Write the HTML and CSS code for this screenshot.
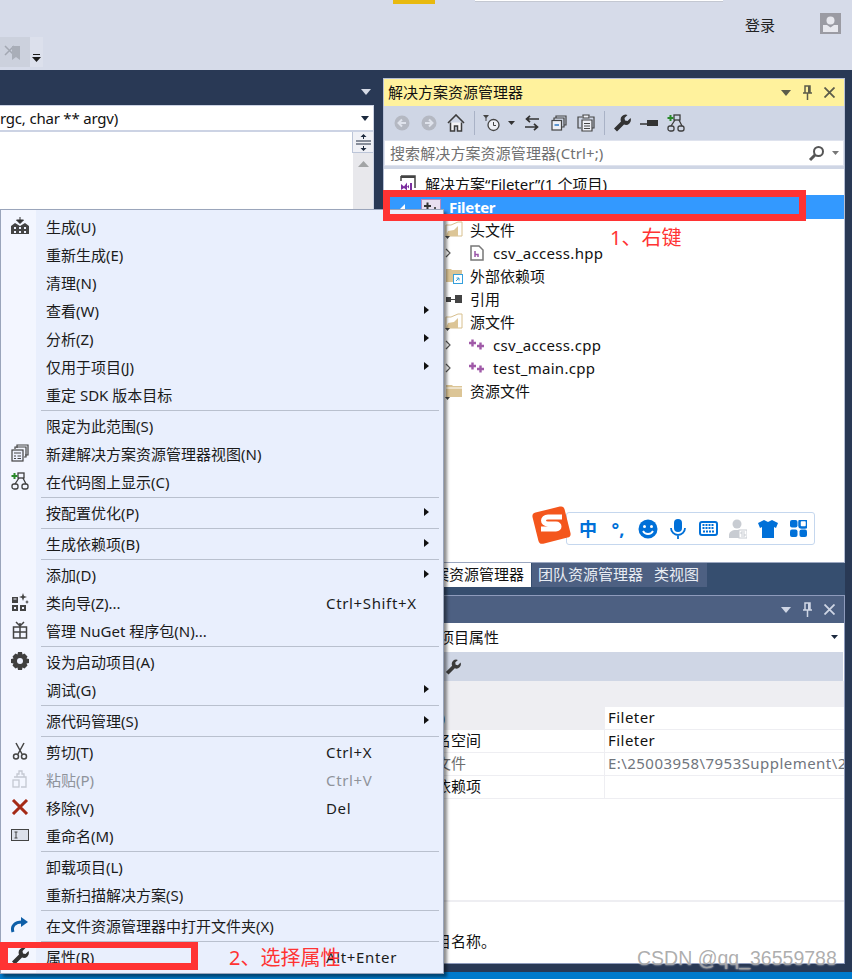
FILE: index.html
```html
<!DOCTYPE html>
<html lang="zh-CN">
<head>
<meta charset="utf-8">
<title>Visual Studio</title>
<link rel="stylesheet" href="styles.css">
</head>
<body>
<div class="app">
  <header class="topbar">
    <div class="top-strip">
      <span class="top-accent"></span>
      <span class="top-input"></span>
    </div>
    <div class="account">
      <span class="login">登录</span>
      <span class="avatar"><svg width="21" height="21" viewBox="0 0 21 21"><rect width="21" height="21" fill="#9b9ba3"/><circle cx="10.5" cy="7.5" r="4" fill="#e8e8ee"/><path d="M3 19v-7h4l3.500 2.500L14 12h4v7z" fill="#e8e8ee"/></svg></span>
    </div>
    <div class="quick">
      <span class="quick-btn"><svg width="18" height="18" viewBox="0 0 18 18" fill="none" stroke="#a3a8b2"><path d="M1 3l9 9M10 3l-9 9" stroke-width="1.500"/><path d="M8 3h8v14l-4-3-4 3z" fill="#a9aeb8" stroke="none"/></svg></span>
      <span class="quick-more"><svg width="9" height="9" viewBox="0 0 9 9"><path d="M1 0h7v1H1z" fill="#1b1b1b"/><path d="M0 3h9L4.500 8z" fill="#1b1b1b"/></svg></span>
    </div>
  </header>

  <main class="workspace">
    <section class="editor">
      <div class="editor-head"><svg width="10" height="6" viewBox="0 0 10 6"><path d="M0 0h10L5 6z" fill="#d5dae6"/></svg></div>
      <div class="combo"><span class="combo-text">rgc, char ** argv)</span><svg width="8" height="5" viewBox="0 0 8 5"><path d="M0 0h8L4 5z" fill="#1b293e"/></svg></div>
      <div class="code">
        <div class="code-body"></div>
        <div class="vscroll">
          <div class="split-btn"><svg width="15" height="17" viewBox="0 0 15 17"><path d="M0 7h15M0 10h15M7.500 1v4M7.500 12v4" stroke="#1e2a3e" fill="none"/><path d="M7.500 0l3 3h-6zM7.500 17l3-3h-6z" fill="#1e2a3e"/></svg></div>
          <svg class="up-arrow" width="11" height="6" viewBox="0 0 11 6"><path d="M5.500 0L11 6H0z" fill="#a2a4a5"/></svg>
        </div>
      </div>
    </section>

    <section class="side">
      <div class="explorer">
        <div class="tw-title">
          <span class="tw-name">解决方案资源管理器</span>
          <svg class="tw-ico" width="10" height="6" viewBox="0 0 10 6"><path d="M0 0h10L5 6z" fill="#5c5c4a"/></svg>
          <svg class="tw-ico" width="11" height="15" viewBox="0 0 11 15"><path d="M3 1h5v7H3zM1 8h9M5.500 8v7" stroke="#5c5c4a" stroke-width="1.500" fill="none"/><path d="M6 1h2v7H6z" fill="#5c5c4a"/></svg>
          <svg class="tw-ico" width="11" height="11" viewBox="0 0 11 11"><path d="M.5.500l10 10M10.500.500l-10 10" stroke="#5c5c4a" stroke-width="1.800"/></svg>
        </div>
        <div class="se-tools">
          <span class="tool"><svg width="16" height="16" viewBox="0 0 16 16"><circle cx="8" cy="8" r="7.500" fill="#b4b8c2"/><path d="M12 8H5M8 4.500L4.500 8 8 11.500" fill="none" stroke="#dfe3ec" stroke-width="2"/></svg></span>
          <span class="tool"><svg width="16" height="16" viewBox="0 0 16 16"><circle cx="8" cy="8" r="7.500" fill="#b4b8c2"/><path d="M4 8h7M8 4.500L11.500 8 8 11.500" fill="none" stroke="#dfe3ec" stroke-width="2"/></svg></span>
          <span class="tool"><svg width="18" height="18" viewBox="0 0 18 18"><path d="M1 9l8-8 8 8" fill="none" stroke="#3c3c3c" stroke-width="1.600"/><path d="M3.500 8.500V17h4v-5h3v5h4V8.500" fill="#f4f4f6" stroke="#3c3c3c" stroke-width="1.500"/></svg></span>
          <span class="tool-sep"></span>
          <span class="tool"><svg width="18" height="18" viewBox="0 0 18 18"><circle cx="10.500" cy="11" r="5.500" fill="#eef0f6" stroke="#444" stroke-width="1.300"/><path d="M10.500 8v3.500H13" fill="none" stroke="#444"/><path d="M0 1h6L3 4.500z" fill="#444"/><path d="M3 4v3" stroke="#444"/></svg></span>
          <span class="tool-dd"><svg width="7" height="4" viewBox="0 0 7 4"><path d="M0 0h7L3.500 4z" fill="#333"/></svg></span>
          <span class="tool"><svg width="16" height="16" viewBox="0 0 16 16" fill="none" stroke="#333" stroke-width="1.700"><path d="M15 4H3M6 .8L2.500 4 6 7.200"/><path d="M1 12h12M10 8.800l3.500 3.200-3.500 3.200"/></svg></span>
          <span class="tool"><svg width="16" height="16" viewBox="0 0 16 16" fill="none" stroke="#444" stroke-width="1.200"><path d="M5 3V1h10v9h-2"/><path d="M3 5V3h10v9h-2"/><rect x="1" y="5.500" width="9.500" height="9.500" fill="#eef0f6"/><path d="M3.500 10h4.500" stroke="#2c78c4" stroke-width="1.500"/></svg></span>
          <span class="tool"><svg width="18" height="18" viewBox="0 0 18 18" fill="none" stroke="#444" stroke-width="1.200"><path d="M4 14H1V3h4M13 3h4v11h-2"/><path d="M6 1h6v3H6z" fill="#eef0f6"/><path d="M5 6h10v11H5z" fill="#eef0f6"/><path d="M7 9.500h6M7 12h6M7 14.500h6" stroke-width="1"/></svg></span>
          <span class="tool-sep"></span>
          <span class="tool"><svg width="18" height="18" viewBox="0 0 18 18"><path d="M1 14.500l7-7a5 5 0 0 1 6.500-6.500l-3 3 .5 2.500 2.500.5 3-3A5 5 0 0 1 11 10.500L4 17.500z" fill="#333"/></svg></span>
          <span class="tool"><svg width="18" height="8" viewBox="0 0 18 8"><path d="M0 5h7" stroke="#333" stroke-width="1.500"/><rect x="7" y="1" width="11" height="6" fill="#333"/></svg></span>
          <span class="tool"><svg width="18" height="18" viewBox="0 0 18 18" fill="none" stroke="#3d3d3d" stroke-width="1.300"><rect x="7" y="1" width="6" height="5"/><rect x="1" y="12" width="6" height="5" rx="2"/><rect x="11" y="12" width="6" height="5" rx="2"/><path d="M8 6l-4 6M12 6l3 6"/><path d="M3.500 1v6M.5 4h6" stroke="#2a8a2a" stroke-width="2"/></svg></span>
        </div>
        <div class="se-search">
          <span class="placeholder">搜索解决方案资源管理器(Ctrl+;)</span>
          <svg width="17" height="17" viewBox="0 0 17 17" fill="none"><circle cx="10.500" cy="6.500" r="4.500" stroke="#555" stroke-width="2"/><path d="M7 10l-5 5" stroke="#555" stroke-width="3"/></svg>
          <svg class="search-dd" width="7" height="4" viewBox="0 0 7 4"><path d="M0 0h7L3.500 4z" fill="#777"/></svg>
        </div>
        <ul class="tree">
          <li class="node node-sln"><svg class="ni" width="17" height="17" viewBox="0 0 17 17"><path d="M1 1h14v12" fill="none" stroke="#444" stroke-width="1.500"/><path d="M1 1v5" stroke="#444" stroke-width="1.500"/><path d="M1 1h14v2H1z" fill="#444"/><path d="M1 9l3 2.500 3-4v8l-3-2.500-3 2zM9 10l-2 1.500 2 2z" fill="#7c2e9f"/><rect x="10" y="8" width="2" height="7" fill="#7c2e9f"/></svg><span>解决方案“Fileter”(1 个项目)</span></li>
          <li class="node node-proj"><svg class="twist" width="7" height="7" viewBox="0 0 7 7"><path d="M7 0v7H0z" fill="#fff"/></svg><svg class="ni-proj" width="20" height="17" viewBox="0 0 20 17"><rect x=".5" y=".5" width="19" height="16" fill="#e8dff0" stroke="#b08ac0"/><path d="M3 7h7M6.500 3.500v7" stroke="#333" stroke-width="2"/><path d="M11 11h6M14 8v6" stroke="#555" stroke-width="2"/></svg><b>Fileter</b></li>
          <li class="node node-d1"><svg class="ni-fold" width="18" height="18" viewBox="0 0 18 18"><path d="M1 4h5l7-3h4v14H1z" fill="#fff" stroke="#d8c08e"/><path d="M1 15l2-5 6-1 4-4v10z" fill="#dcc596"/><path d="M0 15h5l-2.500 3z" fill="#444"/></svg><span>头文件</span></li>
          <li class="node node-d2"><svg class="chev" width="6" height="10" viewBox="0 0 6 10"><path d="M1 1l4 4-4 4" fill="none" stroke="#555" stroke-width="1.200"/></svg><svg class="ni-file" width="16" height="16" viewBox="-1 0 16 16"><path d="M1 1h8l4 4v10H1z" fill="#fff" stroke="#777" stroke-width="1.500"/><path d="M5 6v6M5 9.500h3v2.500" fill="none" stroke="#9a55a8" stroke-width="1.500"/></svg><span>csv_access.hpp</span></li>
          <li class="node node-d1"><svg class="ni-fold" width="18" height="18" viewBox="0 0 18 18"><path d="M1 2h5l1 1h10v6H1z" fill="#dcc596"/><path d="M1 5h16v10H1z" fill="#dcc596"/><rect x="8.500" y="7.500" width="9" height="9" fill="#fff" stroke="#35a0dc"/><path d="M11 14l3-3M11.500 11H14v2.500" fill="none" stroke="#35a0dc"/></svg><span>外部依赖项</span></li>
          <li class="node node-d1"><svg class="ni-fold" width="18" height="18" viewBox="0 0 18 18"><rect x="1" y="7" width="5" height="5" fill="#444"/><path d="M6 9.500h4" stroke="#444"/><rect x="10" y="5" width="7" height="8" fill="#444"/></svg><span>引用</span></li>
          <li class="node node-d1"><svg class="ni-fold" width="18" height="18" viewBox="0 0 18 18"><path d="M1 4h5l7-3h4v14H1z" fill="#fff" stroke="#d8c08e"/><path d="M1 15l2-5 6-1 4-4v10z" fill="#dcc596"/><path d="M0 15h5l-2.500 3z" fill="#444"/></svg><span>源文件</span></li>
          <li class="node node-d2"><svg class="chev" width="6" height="10" viewBox="0 0 6 10"><path d="M1 1l4 4-4 4" fill="none" stroke="#555" stroke-width="1.200"/></svg><svg class="ni-file" width="16" height="16" viewBox="0 0 16 16"><path d="M3.500 2.500v7M0 6h7M11.500 5.500v7M8 9h7" stroke="#a05aa8" stroke-width="2.400"/></svg><span>csv_access.cpp</span></li>
          <li class="node node-d2"><svg class="chev" width="6" height="10" viewBox="0 0 6 10"><path d="M1 1l4 4-4 4" fill="none" stroke="#555" stroke-width="1.200"/></svg><svg class="ni-file" width="16" height="16" viewBox="0 0 16 16"><path d="M3.500 2.500v7M0 6h7M11.500 5.500v7M8 9h7" stroke="#a05aa8" stroke-width="2.400"/></svg><span>test_main.cpp</span></li>
          <li class="node node-d1"><svg class="ni-fold" width="18" height="18" viewBox="0 0 18 18"><path d="M1 3h6l1 1h9v11H1z" fill="#dcc596"/><path d="M1 6h16" stroke="#fff"/><path d="M0 15h5l-2.500 3z" fill="#444"/></svg><span>资源文件</span></li>
        </ul>
      </div>
      <nav class="tabs">
        <span class="tab tab-on">解决方案资源管理器</span>
        <span class="tab tab-a">团队资源管理器</span>
        <span class="tab tab-b">类视图</span>
      </nav>
      <div class="props">
        <div class="tw-title tw-dark">
          <span class="tw-name">属性</span>
          <svg class="tw-ico" width="10" height="6" viewBox="0 0 10 6"><path d="M0 0h10L5 6z" fill="#cfd6e5"/></svg>
          <svg class="tw-ico" width="11" height="15" viewBox="0 0 11 15"><path d="M3 1h5v7H3zM1 8h9M5.500 8v7" stroke="#cfd6e5" stroke-width="1.500" fill="none"/><path d="M6 1h2v7H6z" fill="#cfd6e5"/></svg>
          <svg class="tw-ico" width="11" height="11" viewBox="0 0 11 11"><path d="M.5.500l10 10M10.500.500l-10 10" stroke="#cfd6e5" stroke-width="1.800"/></svg>
        </div>
        <div class="prop-select"><span>Fileter 项目属性</span><svg width="7" height="4" viewBox="0 0 7 4"><path d="M0 0h7L3.500 4z" fill="#1b293e"/></svg></div>
        <div class="prop-tools"><svg width="16" height="16" viewBox="0 0 18 18"><path d="M1 14.500l7-7a5 5 0 0 1 6.500-6.500l-3 3 .5 2.500 2.500.5 3-3A5 5 0 0 1 11 10.500L4 17.500z" fill="#3a3a3a"/></svg></div>
        <div class="prop-cat"></div>
        <div class="prop-row prop-row-sel"><span class="pk">(名称)</span><span class="pv">Fileter</span></div>
        <div class="prop-row"><span class="pk">根命名空间</span><span class="pv">Fileter</span></div>
        <div class="prop-row prop-row-dim"><span class="pk">项目文件</span><span class="pv">E:\25003958\7953Supplement\2</span></div>
        <div class="prop-row"><span class="pk">项目依赖项</span><span class="pv"></span></div>
        <div class="prop-fill"></div>
        <div class="prop-desc">指定项目名称。</div>
      </div>
    </section>
  </main>
  <footer class="statusbar"></footer>

  <div class="menu">
    <div class="mi"><span class="mic"><svg width="18" height="18" viewBox="0 0 18 18"><path d="M9 0v4M5.500 3L9 6.500 12.500 3z" stroke="#333" fill="#333"/><path d="M0 9l4-3 5 3 5-3 4 3v8H0z" fill="#444"/><path d="M3 10h2v2H3zM8 10h2v2H8zM13 10h2v2h-2zM3 14h2v2H3zM8 14h2v2H8zM13 14h2v2h-2z" fill="#eef2ff"/></svg></span><span>生成(U)</span></div>
    <div class="mi"><span class="mic"></span><span>重新生成(E)</span></div>
    <div class="mi"><span class="mic"></span><span>清理(N)</span></div>
    <div class="mi"><span class="mic"></span><span>查看(W)</span><i class="sub"></i></div>
    <div class="mi"><span class="mic"></span><span>分析(Z)</span><i class="sub"></i></div>
    <div class="mi"><span class="mic"></span><span>仅用于项目(J)</span><i class="sub"></i></div>
    <div class="mi"><span class="mic"></span><span>重定 SDK 版本目标</span></div>
    <hr class="ms">
    <div class="mi"><span class="mic"></span><span>限定为此范围(S)</span></div>
    <div class="mi"><span class="mic"><svg width="18" height="18" viewBox="0 0 18 18" fill="none" stroke="#444" stroke-width="1.200"><path d="M6 4V1h11v10h-3"/><path d="M4 5V3h11v10h-2"/><rect x="1" y="6" width="11" height="11" fill="#eef2ff"/><path d="M3 9h7M3 12h2M6.500 12H10M3 14.500h2M6.500 14.500H10"/></svg></span><span>新建解决方案资源管理器视图(N)</span></div>
    <div class="mi"><span class="mic"><svg width="18" height="18" viewBox="0 0 18 18" fill="none" stroke="#3d3d3d" stroke-width="1.300"><rect x="7" y="1" width="6" height="5"/><rect x="1" y="12" width="6" height="5" rx="2"/><rect x="11" y="12" width="6" height="5" rx="2"/><path d="M8 6l-4 6M12 6l3 6"/><path d="M3.500 1v6M.5 4h6" stroke="#2a8a2a" stroke-width="2"/></svg></span><span>在代码图上显示(C)</span></div>
    <hr class="ms">
    <div class="mi"><span class="mic"></span><span>按配置优化(P)</span><i class="sub"></i></div>
    <hr class="ms">
    <div class="mi"><span class="mic"></span><span>生成依赖项(B)</span><i class="sub"></i></div>
    <hr class="ms">
    <div class="mi"><span class="mic"></span><span>添加(D)</span><i class="sub"></i></div>
    <div class="mi"><span class="mic"><svg width="18" height="18" viewBox="0 0 18 18"><path d="M1 4h6v6H1zM1 12h6v6H1zM9 12h6v6H9z" fill="#444"/><path d="M2.500 5.500h3v1h-3zM3 14h2v2H3zM11 14h2v2h-2z" fill="#eef2ff"/><path d="M12 0l1 3 3 1-3 1-1 3-1-3-3-1 3-1z" fill="#444"/><path d="M16 7l.7 1.500 1.300.5-1.300.5L16 11l-.7-1.500L14 9l1.300-.5z" fill="#444"/></svg></span><span>类向导(Z)...</span><span class="key">Ctrl+Shift+X</span></div>
    <div class="mi"><span class="mic"><svg width="18" height="18" viewBox="-1 0 18 18" fill="none" stroke="#444" stroke-width="1.500"><rect x="1.500" y="6" width="13" height="11"/><path d="M8 2v15M1.500 11h13M4 1l4 4 4-4"/></svg></span><span>管理 NuGet 程序包(N)...</span></div>
    <hr class="ms">
    <div class="mi"><span class="mic"><svg width="18" height="18" viewBox="0 0 18 18"><path d="M7 0h4l.5 2.500 2-1 3 3-1 2L18 7v4l-2.500.5 1 2-3 3-2-1L11 18H7l-.5-2.500-2 1-3-3 1-2L0 11V7l2.500-.5-1-2 3-3 2 1z" fill="#3f3f3f"/><circle cx="9" cy="9" r="3" fill="#eef2ff"/></svg></span><span>设为启动项目(A)</span></div>
    <div class="mi"><span class="mic"></span><span>调试(G)</span><i class="sub"></i></div>
    <hr class="ms">
    <div class="mi"><span class="mic"></span><span>源代码管理(S)</span><i class="sub"></i></div>
    <hr class="ms">
    <div class="mi"><span class="mic"><svg width="18" height="18" viewBox="-1 0 18 18" fill="none" stroke="#444" stroke-width="1.500"><path d="M4 1l6 11M12 1L6 12"/><circle cx="4" cy="14.500" r="2.500"/><circle cx="12" cy="14.500" r="2.500"/></svg></span><span>剪切(T)</span><span class="key">Ctrl+X</span></div>
    <div class="mi mi-off"><span class="mic"><svg width="18" height="18" viewBox="-1 0 18 18" fill="none" stroke="#c4c8d2" stroke-width="1.300"><path d="M2 7h12v3M5 7V4h2V1h3v3h2v3"/><rect x="1" y="10" width="6" height="7"/><path d="M9 17h5v-7"/></svg></span><span>粘贴(P)</span><span class="key">Ctrl+V</span></div>
    <div class="mi"><span class="mic"><svg width="18" height="16" viewBox="0 0 18 16"><path d="M2 1l14 14M16 1L2 15" stroke="#a52a16" stroke-width="3"/></svg></span><span>移除(V)</span><span class="key">Del</span></div>
    <div class="mi"><span class="mic"><svg width="18" height="12" viewBox="0 0 18 12"><rect x=".5" y=".5" width="17" height="11" fill="#dde1ea" stroke="#444"/><path d="M5 3v6M3.500 3h3M3.500 9h3" stroke="#444"/></svg></span><span>重命名(M)</span></div>
    <hr class="ms">
    <div class="mi"><span class="mic"></span><span>卸载项目(L)</span></div>
    <div class="mi"><span class="mic"></span><span>重新扫描解决方案(S)</span></div>
    <hr class="ms">
    <div class="mi"><span class="mic"><svg width="18" height="16" viewBox="0 0 18 16" fill="none"><path d="M2 15C0 9 4 5 11 5" stroke="#0e5fa8" stroke-width="3"/><path d="M10 0l7 5-7 5z" fill="#0e5fa8"/></svg></span><span>在文件资源管理器中打开文件夹(X)</span></div>
    <hr class="ms">
    <div class="mi"><span class="mic"><svg width="18" height="18" viewBox="0 0 18 18"><path d="M1 14.500l7-7a5 5 0 0 1 6.500-6.500l-3 3 .5 2.500 2.500.5 3-3A5 5 0 0 1 11 10.500L4 17.500z" fill="#333"/></svg></span><span>属性(R)</span><span class="key">Alt+Enter</span></div>
  </div>

  <div class="mark mark-a"></div>
  <div class="mark mark-b"></div>
  <div class="note note-a">1、右键</div>
  <div class="note note-b">2、选择属性</div>

  <div class="ime">
    <svg class="ime-logo" width="42" height="40" viewBox="0 0 42 40"><rect x="4" y="4" width="33" height="32" rx="4" fill="#f4561c" transform="rotate(-14 21 20)"/><path d="M31 12H17c-6 0-6 7 0 7h8c4 0 4 5 0 5H10" fill="none" stroke="#fff" stroke-width="5"/></svg>
    <div class="ime-bar">
      <span class="ime-t ime-zh">中</span>
      <span class="ime-t ime-p">°,</span>
      <svg width="20" height="20" viewBox="0 0 20 20"><circle cx="10" cy="10" r="9.500" fill="#0070d8"/><circle cx="6.500" cy="7.500" r="1.500" fill="#fff"/><circle cx="13.500" cy="7.500" r="1.500" fill="#fff"/><path d="M5 12c2 4 8 4 10 0" fill="none" stroke="#fff" stroke-width="1.800"/></svg>
      <svg width="16" height="20" viewBox="0 0 16 20"><rect x="4" y="0" width="8" height="13" rx="4" fill="#0070d8"/><path d="M1 9a7 7 0 0 0 14 0M8 16v4" fill="none" stroke="#0070d8" stroke-width="1.800"/></svg>
      <svg width="19" height="15" viewBox="0 0 19 15"><rect x="1" y="1" width="17" height="13" rx="2" fill="#fff" stroke="#0070d8" stroke-width="2"/><path d="M3.500 4h12M3.500 7h12M4 10.500h11" stroke="#0070d8" stroke-width="2" stroke-dasharray="2 1"/></svg>
      <svg width="18" height="20" viewBox="0 0 18 20"><circle cx="8" cy="5" r="4.500" fill="#c8ccd2"/><path d="M0 19v-3c0-3 3-5 7-5h3v8z" fill="#c8ccd2"/><rect x="10" y="11" width="8" height="8" fill="#fff" stroke="#c8ccd2"/><path d="M16 13h-4v2h4v2h-4" fill="none" stroke="#c8ccd2"/></svg>
      <svg width="20" height="18" viewBox="0 0 20 18"><path d="M6 0l4 2 4-2 6 3-2 5-2-1v11H4V7L2 8 0 3z" fill="#0070d8"/></svg>
      <svg width="17" height="17" viewBox="0 0 17 17"><rect x="0" y="0" width="7.500" height="7.500" rx="2" fill="#0070d8"/><rect x="9.500" y="0" width="7.500" height="7.500" rx="2" fill="#fff" stroke="#0070d8" stroke-width="2.500"/><rect x="0" y="9.500" width="7.500" height="7.500" rx="2" fill="#0070d8"/><rect x="9.500" y="9.500" width="7.500" height="7.500" rx="2" fill="#0070d8"/></svg>
    </div>
  </div>

  <div class="watermark">CSDN @qq_36559788</div>
</div>
</body>
</html>
```

FILE: styles.css
```css
* { box-sizing: border-box; }
html, body { margin: 0; padding: 0; }
body {
  width: 852px;
  height: 979px;
  overflow: hidden;
  font: 15px/20px "Noto Sans", "Noto Sans CJK SC", sans-serif;
  color: #111;
  background: #d6dbe9;
}
svg { display: block; flex: none; }
ul { margin: 0; padding: 0; list-style: none; }

.app { position: relative; width: 852px; height: 979px; display: flex; flex-direction: column; overflow: hidden; }

/* top chrome */
.topbar { height: 70px; flex: none; background: #d6dbe9; display: grid; grid-template-columns: 1fr auto; grid-template-rows: 4px 33px 33px; }
.top-strip { grid-column: 1 / 3; display: flex; padding-left: 393px; }
.top-accent { width: 42px; height: 4px; background: #e8b90f; }
.top-input { width: 248px; height: 2px; margin-left: 40px; background: #fff; border-bottom: 1px solid #c4c8d2; }
.account { grid-column: 2; grid-row: 2; display: flex; align-items: flex-start; padding: 9px 11px 0 0; }
.login { margin: 2px 45px 0 0; color: #222; }
.avatar { width: 21px; height: 21px; }
.quick { grid-column: 1 / 3; grid-row: 3; display: flex; height: 30px; }
.quick-btn { width: 30px; background: #ccd1dd; display: flex; align-items: center; justify-content: center; padding-right: 4px; }
.quick-more { width: 13px; background: #dce0ec; display: flex; align-items: flex-end; justify-content: center; padding-bottom: 4px; }

/* main */
.workspace { flex: 1; min-height: 0; background: #293955; display: flex; }
.editor { width: 374px; flex: none; display: flex; flex-direction: column; }
.editor-head { height: 35px; display: flex; align-items: center; justify-content: flex-end; padding: 9px 3px 0 0; }
.combo { height: 27px; background: #fff; border: 1px solid #ccd3e4; border-width: 1px 1px 2px 0; display: flex; align-items: center; justify-content: space-between; padding: 0 4px 0 0; }
.combo-text { letter-spacing: -.2px; }
.code { flex: 1; display: flex; background: #fff; border-right: 1px solid #ccd3e4; }
.code-body { flex: 1; }
.vscroll { width: 20px; background: #e8e8ec; display: flex; flex-direction: column; align-items: center; }
.split-btn { width: 21px; height: 21px; margin-left: -1px; background: #f0f1f6; border: 1px solid #bcc5d8; border-width: 0 0 1px 1px; display: flex; align-items: center; justify-content: center; }
.up-arrow { margin-top: 8px; }

.side { width: 462px; margin-left: 9px; padding: 8px 0; display: flex; flex-direction: column; }
.explorer { height: 485px; flex: none; background: #cfd6e5; border: 1px solid #b6c0d6; border-bottom-color: #9ba7c0; display: flex; flex-direction: column; }
.tw-title { height: 27px; flex: none; display: flex; align-items: center; padding: 0 9px 0 4px; background: #fff29d; gap: 11px; }
.tw-name { flex: 1; margin-top: -2px; }
.se-tools { height: 34px; flex: none; display: flex; align-items: center; padding-left: 4.500px; }
.tool { width: 27px; height: 26px; display: flex; align-items: center; justify-content: center; }
.tool-sep { width: 1px; height: 24px; margin: 0 4px; background: #a9b2c6; }
.tool-dd { width: 12px; margin-right: 1px; display: flex; justify-content: center; }
.se-search { height: 26px; flex: none; background: #fff; border: 1px solid #dfe3ee; display: flex; align-items: center; padding: 0 4px 0 5px; }
.placeholder { flex: 1; color: #717171; letter-spacing: .1px; }
.search-dd { margin-left: 7px; }
.tree { flex: 1; min-height: 0; margin-top: 3px; padding-top: 3px; background: #fff; }
.node { height: 23px; display: flex; align-items: center; white-space: nowrap; }
.node-sln { padding-left: 16px; gap: 8px; }
.node-proj { height: 24px; margin-bottom: -1px; padding-left: 14px; background: #3399ff; color: #fff; }
.node-proj b { margin-left: 8px; font-weight: 700; letter-spacing: -.3px; }
.twist { margin-right: 16px; }
.node-d1 { padding-left: 61px; gap: 7px; }
.node-d2 { padding-left: 61px; letter-spacing: .3px; }
.chev { margin-right: 18px; }
.ni-file { margin-right: 8px; }

.tabs { height: 32px; flex: none; background: #364e6f; display: flex; align-items: flex-start; }
.tab { height: 24px; line-height: 23px; white-space: nowrap; }
.tab-on { width: 148px; padding-left: 6px; background: #fff; margin-right: 1px; }
.tab-a { width: 122px; padding-left: 6px; background: #4d6082; color: #e8ecf3; }
.tab-b { width: 53px; padding-left: 0; background: #4d6082; color: #e8ecf3; }

.props { flex: 1; background: #fff; border: 1px solid #8e9bbc; display: flex; flex-direction: column; min-height: 0; }
.tw-dark { background: #4d6082; color: #cfd6e5; }
.prop-select { height: 29px; flex: none; display: flex; align-items: center; justify-content: space-between; padding: 0 6px 2px 7px; }
.prop-tools { height: 29px; flex: none; background: #cfd6e5; margin-right: 1px; display: flex; align-items: center; padding-left: 61px; }
.prop-cat { height: 26px; flex: none; background: #eeeef2; }
.prop-row { height: 23px; flex: none; display: flex; border-bottom: 1px solid #eeeef2; white-space: nowrap; overflow: hidden; }
.pk { width: 221px; flex: none; padding-left: 22px; border-right: 1px solid #eeeef2; }
.pv { flex: 1; padding-left: 3px; overflow: hidden; letter-spacing: .45px; }
.prop-row-sel .pk { background: #eeeef2; }
.prop-row-dim { color: #6d6d6d; }
.prop-row-dim .pv { color: #70757d; }
.prop-fill { height: 103px; flex: none; border-bottom: 2px solid #eeeef2; }
.prop-desc { padding: 29px 0 0 7px; }

.statusbar { height: 7px; flex: none; background: #007acc; }

/* overlays */
.menu { position: absolute; left: 0; top: 209px; width: 444px; height: 765px; padding: 3px 4px 0 1px; color: #1b1b1b; background: linear-gradient(to right, #f3f6ff 35px, #e9effd 35px); border: 1px solid #9aa5bb; box-shadow: 3px 3px 3px rgba(0, 0, 0, .45); }
.mi { position: relative; height: 28px; display: flex; align-items: center; white-space: nowrap; }
.mic { width: 44px; flex: none; height: 28px; display: flex; align-items: center; padding: 0 0 2px 9px; }
.mi-off { color: #8f939b; }
.key { position: absolute; left: 324px; top: 4px; letter-spacing: .65px; }
.sub { position: absolute; left: 422px; top: 9px; width: 0; height: 0; border-left: 5px solid #111; border-top: 4px solid transparent; border-bottom: 4px solid transparent; }
.ms { height: 3px; margin: 0 0 0 39px; padding: 0; border: 0; background: linear-gradient(#b9c0ce, #b9c0ce) 0 1px / 100% 1px no-repeat; }

.mark { position: absolute; border: 7px solid #ff3333; }
.mark-a { left: 383px; top: 190px; width: 423px; height: 31px; }
.mark-b { left: 0; top: 942px; width: 198px; height: 28px; border-width: 6px 7px 7px 8px; }
.note { position: absolute; font-size: 20px; line-height: 28px; color: #ff3333; white-space: nowrap; }
.note-a { left: 610px; top: 224px; }
.note-b { left: 229px; top: 944px; }

.ime { position: absolute; left: 531px; top: 505px; width: 284px; height: 41px; }
.ime-logo { position: absolute; left: 0; top: 0; z-index: 1; }
.ime-bar { position: absolute; left: 35px; top: 7px; width: 249px; height: 33px; background: #fff; border: 1px solid #c5d7ee; border-radius: 3px; display: grid; grid-template-columns: repeat(8, 30px); justify-items: center; align-items: center; padding-left: 6px; }
.ime-t { color: #0070d8; font-weight: 700; }
.ime-zh { font-size: 18px; }
.ime-p { font-size: 18px; }

.watermark { position: absolute; left: 637px; top: 947px; font: 19.500px/22px "Liberation Sans", sans-serif; color: rgba(160, 160, 160, .85); text-shadow: 0 0 2px #fff; white-space: nowrap; }
```
